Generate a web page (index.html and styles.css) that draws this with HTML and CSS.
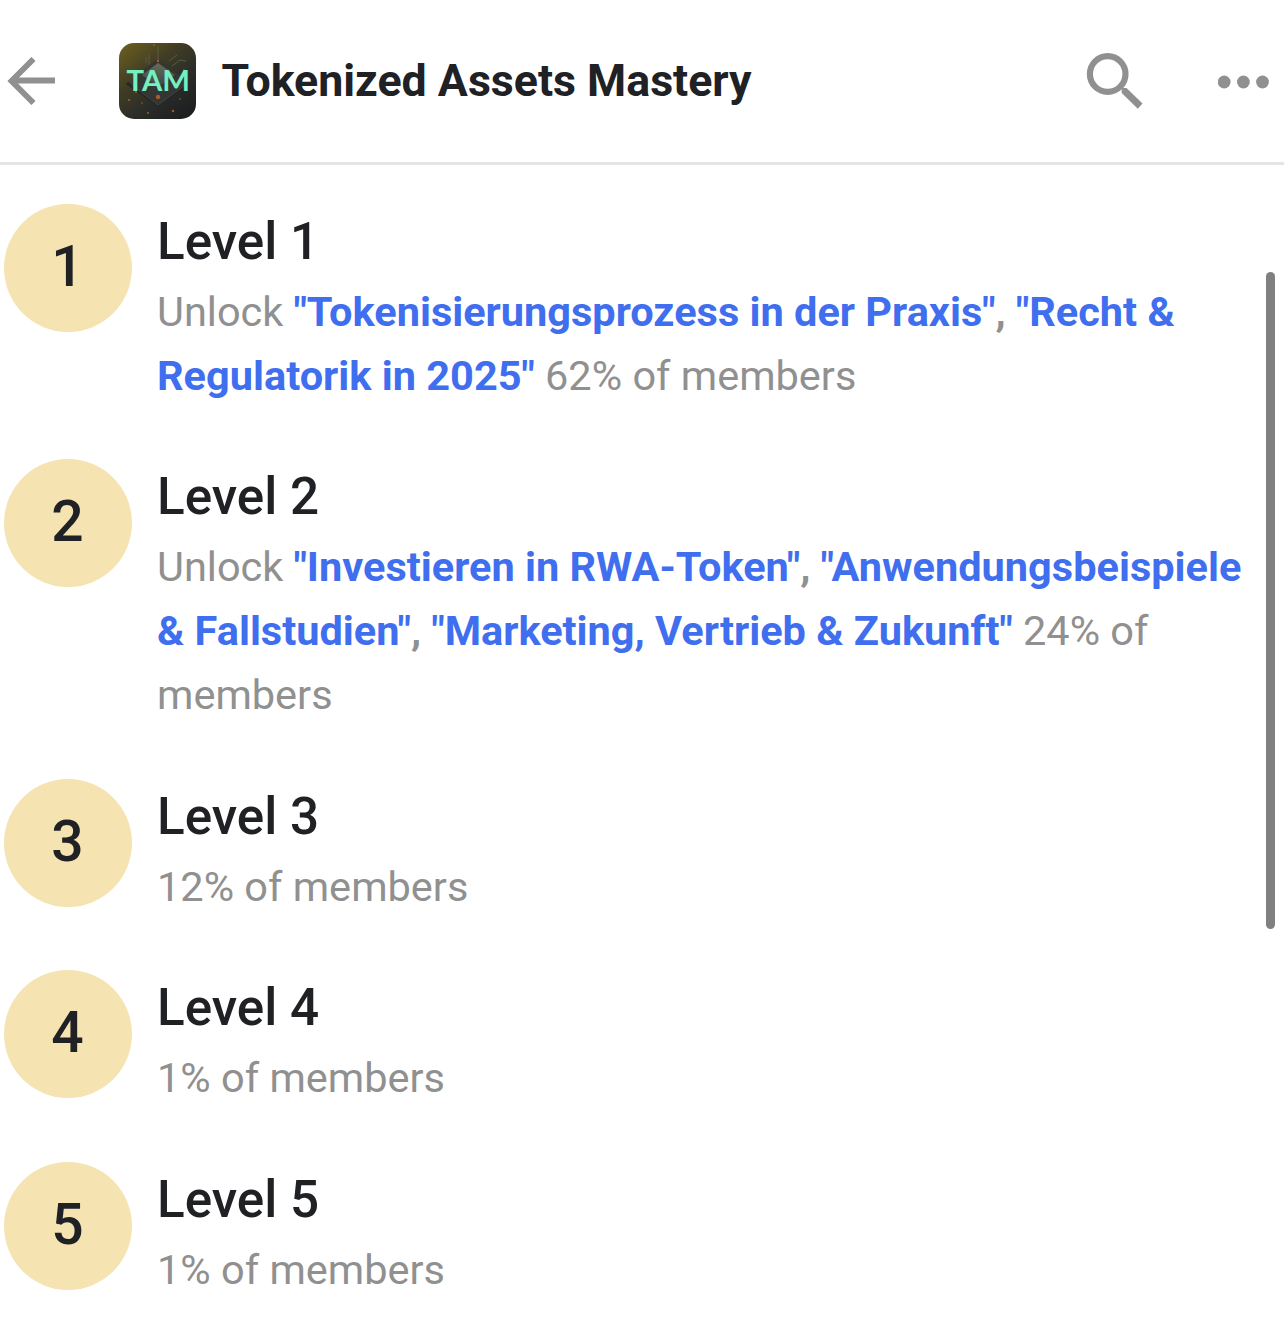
FILE: index.html
```
<!DOCTYPE html>
<html lang="de">
<head>
  <meta charset="UTF-8" />
  <meta name="viewport" content="width=device-width, initial-scale=1.0" />
  <title>Tokenized Assets Mastery</title>
  <link rel="stylesheet" href="styles.css">
</head>
<body>

  <header class="topbar">
    <svg class="icon-back" viewBox="0 0 48 48" aria-label="Back">
      <path d="M26.500 2 L4.500 24 L26.500 46 M4 23.500 H48" fill="none" stroke="#909090" stroke-width="5.800" />
    </svg>

    <svg class="logo" viewBox="0 0 77 76" aria-label="TAM">
      <defs>
        <linearGradient id="logoBg" x1="0" y1="0" x2="0.8" y2="1">
          <stop offset="0" stop-color="#6f6120" />
          <stop offset="0.4" stop-color="#403c24" />
          <stop offset="0.7" stop-color="#2a2c29" />
          <stop offset="1" stop-color="#1e1f21" />
        </linearGradient>
        <linearGradient id="chip" x1="0" y1="0" x2="0" y2="1">
          <stop offset="0" stop-color="#686a5c" />
          <stop offset="1" stop-color="#3a4741" />
        </linearGradient>
      </defs>
      <rect width="77" height="76" rx="15" fill="url(#logoBg)" />
      <path d="M8 40 L39 62 L69 40" fill="none" stroke="#242725" stroke-width="3" />
      <path d="M13 35 L39 16 L66 36 L66 42 L39 62 L13 42 Z" fill="#343633" />
      <path d="M13 42 L39 62 L66 42" fill="none" stroke="#424441" />
      <path d="M23 32 L39 20 L56 32 L39 44 Z" fill="url(#chip)" />
      <path d="M39 3 V17 M30 12 V22 M27 14 V20 M53 23 L61 17 L67 18 M50 18 L58 12" fill="none" stroke="#626354" stroke-width="0.8" />
      <g fill="#a65e2b">
        <circle cx="39" cy="54" r="2.200" />
        <circle cx="39" cy="18" r="1.200" />
        <circle cx="54" cy="68" r="1.200" />
        <circle cx="29" cy="70" r="1" />
        <circle cx="17" cy="49" r="1" />
        <circle cx="10" cy="57" r="1" />
        <circle cx="61" cy="56" r="0.800" />
        <circle cx="23" cy="60" r="0.800" />
        <circle cx="35" cy="2" r="0.900" />
        <circle cx="65" cy="27" r="0.800" />
      </g>
      <text class="logo-text" x="7.500" y="48" textLength="63.500" lengthAdjust="spacingAndGlyphs">TAM</text>
    </svg>

    <h1>Tokenized Assets Mastery</h1>

    <svg class="icon-search" viewBox="0 0 58 58" aria-label="Search">
      <circle cx="21.700" cy="22" r="17.800" fill="none" stroke="#909090" stroke-width="6.200" />
      <path d="M35.700 36 L40.500 36 L56.500 51.500 L51.800 56.700 L35.700 41 Z" fill="#909090" />
    </svg>
    <svg class="icon-more" viewBox="0 0 52 16" fill="#909090" aria-label="More">
      <circle cx="6.200" cy="9" r="6.400" />
      <circle cx="25.400" cy="9" r="6.400" />
      <circle cx="44.500" cy="9" r="6.400" />
    </svg>
  </header>

  <main class="levels">
    <section class="level">
      <div class="badge">1</div>
      <div class="info">
        <h2>Level 1</h2>
        <p>Unlock <a>"Tokenisierungsprozess in der Praxis"</a><b>,</b> <a>"Recht &amp; Regulatorik in 2025"</a> 62% of members</p>
      </div>
    </section>

    <section class="level">
      <div class="badge">2</div>
      <div class="info">
        <h2>Level 2</h2>
        <p>Unlock <a>"Investieren in RWA-Token"</a><b>,</b> <a>"Anwendungsbeispiele &amp; Fallstudien"</a><b>,</b> <a>"Marketing, Vertrieb &amp; Zukunft"</a> 24% of members</p>
      </div>
    </section>

    <section class="level">
      <div class="badge">3</div>
      <div class="info">
        <h2>Level 3</h2>
        <p>12% of members</p>
      </div>
    </section>

    <section class="level">
      <div class="badge">4</div>
      <div class="info">
        <h2>Level 4</h2>
        <p>1% of members</p>
      </div>
    </section>

    <section class="level">
      <div class="badge">5</div>
      <div class="info">
        <h2>Level 5</h2>
        <p>1% of members</p>
      </div>
    </section>
  </main>

  <div class="scrollbar"></div>

</body>
</html>
```

FILE: styles.css
```
* {
  box-sizing: border-box;
}

body {
  margin: 0;
  height: 1341px;
  overflow: hidden;
  position: relative;
  font-family: Roboto, sans-serif;
  background: #fff;
  color: #202124;
}

h1, h2, p {
  margin: 0;
}

.topbar {
  display: flex;
  align-items: center;
  height: 165px;
  padding: 0 14px 0 7px;
  border-bottom: 3px solid #e4e4e4;
}

.icon-back {
  width: 48px;
  height: 48px;
}

.logo {
  width: 77px;
  height: 76px;
  margin-left: 64px;
}

.logo-text {
  font-family: Lato, sans-serif;
  font-size: 28px;
  font-weight: 700;
  fill: #74f0c0;
}

h1 {
  flex: 1;
  margin-left: 25.500px;
  font-size: 44.700px;
  font-weight: 700;
  line-height: 60px;
  white-space: nowrap;
}

.icon-search {
  width: 58px;
  height: 58px;
}

.icon-more {
  width: 52px;
  height: 16px;
  margin-left: 74px;
}

.levels {
  padding: 39px 30px 0 4px;
}

.level {
  display: flex;
  gap: 25px;
  margin-bottom: 51.650px;
}

.badge {
  flex: none;
  width: 128px;
  height: 128px;
  padding-right: 1px;
  border-radius: 50%;
  background: #f5e3b1;
  font-size: 57px;
  font-weight: 500;
  line-height: 126px;
  text-align: center;
}

.info {
  padding-top: 5px;
}

h2 {
  font-size: 51.200px;
  font-weight: 500;
  line-height: 66px;
  margin-bottom: 5px;
}

p {
  font-size: 41.500px;
  line-height: 63.900px;
  color: #909090;
}

p a {
  color: #3f6eee;
  font-weight: 700;
}

p b {
  font-weight: 700;
}

/* شريط التمرير */
.scrollbar {
  position: absolute;
  top: 272px;
  right: 9px;
  width: 9px;
  height: 657px;
  border-radius: 5px;
  background: #808080;
}
```
